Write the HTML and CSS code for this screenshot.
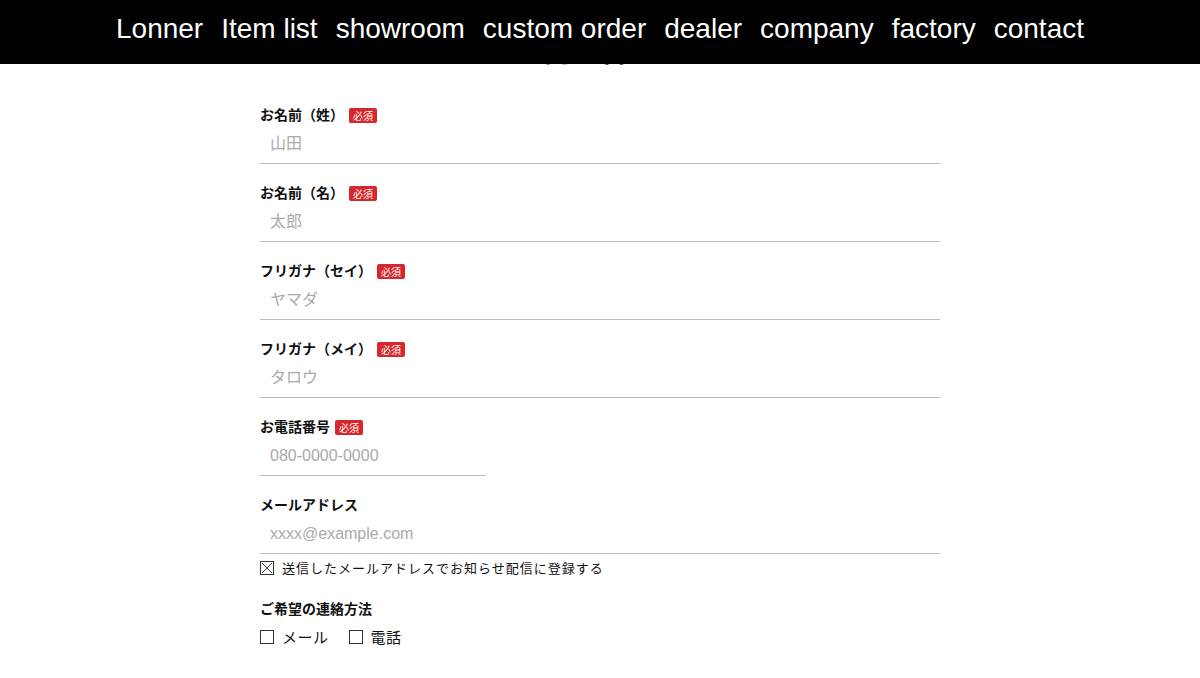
FILE: index.html
```html
<!DOCTYPE html>
<html lang="ja">
<head>
<meta charset="utf-8">
<title>お問い合わせ</title>
<link rel="stylesheet" href="styles.css">
</head>
<body>
<header class="site-header">
  <nav class="nav">
    <a class="nav-link" href="#">Lonner</a>
    <a class="nav-link" href="#">Item list</a>
    <a class="nav-link" href="#">showroom</a>
    <a class="nav-link" href="#">custom order</a>
    <a class="nav-link" href="#">dealer</a>
    <a class="nav-link" href="#">company</a>
    <a class="nav-link" href="#">factory</a>
    <a class="nav-link" href="#">contact</a>
  </nav>
</header>
<main class="main">
  <h2 class="page-title">お問い合わせ</h2>
  <form class="form">
    <div class="field">
      <div class="label-row"><span class="label">お名前（姓）</span><span class="badge">必須</span></div>
      <input class="input" type="text" placeholder="山田">
    </div>
    <div class="field">
      <div class="label-row"><span class="label">お名前（名）</span><span class="badge">必須</span></div>
      <input class="input" type="text" placeholder="太郎">
    </div>
    <div class="field">
      <div class="label-row"><span class="label">フリガナ（セイ）</span><span class="badge">必須</span></div>
      <input class="input" type="text" placeholder="ヤマダ">
    </div>
    <div class="field">
      <div class="label-row"><span class="label">フリガナ（メイ）</span><span class="badge">必須</span></div>
      <input class="input" type="text" placeholder="タロウ">
    </div>
    <div class="field">
      <div class="label-row"><span class="label">お電話番号</span><span class="badge">必須</span></div>
      <input class="input input-short" type="text" placeholder="080-0000-0000">
    </div>
    <div class="field field-email">
      <div class="label-row"><span class="label">メールアドレス</span></div>
      <input class="input" type="text" placeholder="xxxx@example.com">
      <div class="check-row">
        <span class="box box-checked"><svg viewBox="0 0 13 13" width="13" height="13"><path d="M1 1L12 12M12 1L1 12" stroke="#333" stroke-width="1" fill="none"/></svg></span>
        <span class="check-text">送信したメールアドレスでお知らせ配信に登録する</span>
      </div>
    </div>
    <div class="field field-method">
      <div class="label-row"><span class="label">ご希望の連絡方法</span></div>
      <div class="options">
        <span class="option"><span class="box"></span><span class="option-text">メール</span></span>
        <span class="option"><span class="box"></span><span class="option-text">電話</span></span>
      </div>
    </div>
  </form>
</main>
</body>
</html>
```
FILE: styles.css
```css
* { box-sizing: border-box; }
html, body { margin: 0; padding: 0; background: #fff; }
body {
  font-family: "Noto Sans CJK JP", "Liberation Sans", sans-serif;
  color: #111;
}
.site-header {
  position: fixed;
  top: 0; left: 0; right: 0;
  height: 64px;
  background: #000;
  z-index: 10;
}
.nav {
  display: flex;
  justify-content: center;
  align-items: center;
  gap: 18px;
  height: 57px;
}
.nav-link {
  font-family: "Liberation Sans", Arial, sans-serif;
  font-size: 28px;
  color: #fff;
  text-decoration: none;
  line-height: 1;
}
.main {
  width: 680px;
  margin: 0 auto;
  padding-top: 30px;
}
.page-title {
  margin: 0 0 36px;
  text-align: center;
  font-size: 28px;
  line-height: 40px;
  font-weight: 700;
  color: #333;
}
.form { display: flex; flex-direction: column; }
.field { margin-bottom: 20px; display: flex; flex-direction: column; align-items: flex-start; }
.label-row {
  height: 18px;
  display: flex;
  align-items: center;
  gap: 5px;
}
.label {
  font-size: 14px;
  font-weight: 700;
  line-height: 18px;
  color: #111;
  margin-top: -2px;
}
.badge {
  background: #d8262c;
  color: #fff;
  font-size: 10px;
  line-height: 15px;
  height: 15px;
  padding: 0 4px;
  border-radius: 2px;
  margin-top: 0;
}
.input {
  width: 680px;
  height: 40px;
  border: none;
  border-bottom: 1px solid #bbb;
  padding: 0 0 0 10px;
  font-family: "Liberation Sans", "Noto Sans CJK JP", sans-serif;
  font-size: 16px;
  outline: none;
  background: transparent;
}
.input::placeholder { color: #aaa; }
.input-short { width: 226px; }
.check-row {
  margin-top: 4px;
  height: 20px;
  display: flex;
  align-items: center;
  gap: 8px;
}
.box {
  width: 14px;
  height: 14px;
  border: 1px solid #333;
  display: inline-flex;
  align-items: center;
  justify-content: center;
  flex: none;
  background: #fff;
}
.box svg { display: block; width: 12px; height: 12px; }
.check-text {
  font-size: 13px;
  letter-spacing: 1px;
  line-height: 20px;
  color: #111;
}
.field-email { margin-bottom: 22px; }
.options {
  margin-top: 10px;
  height: 18px;
  display: flex;
  align-items: center;
  gap: 20px;
}
.option { display: flex; align-items: center; gap: 8px; }
.option-text {
  font-size: 15px;
  letter-spacing: 0.5px;
  line-height: 18px;
  color: #111;
}
```
